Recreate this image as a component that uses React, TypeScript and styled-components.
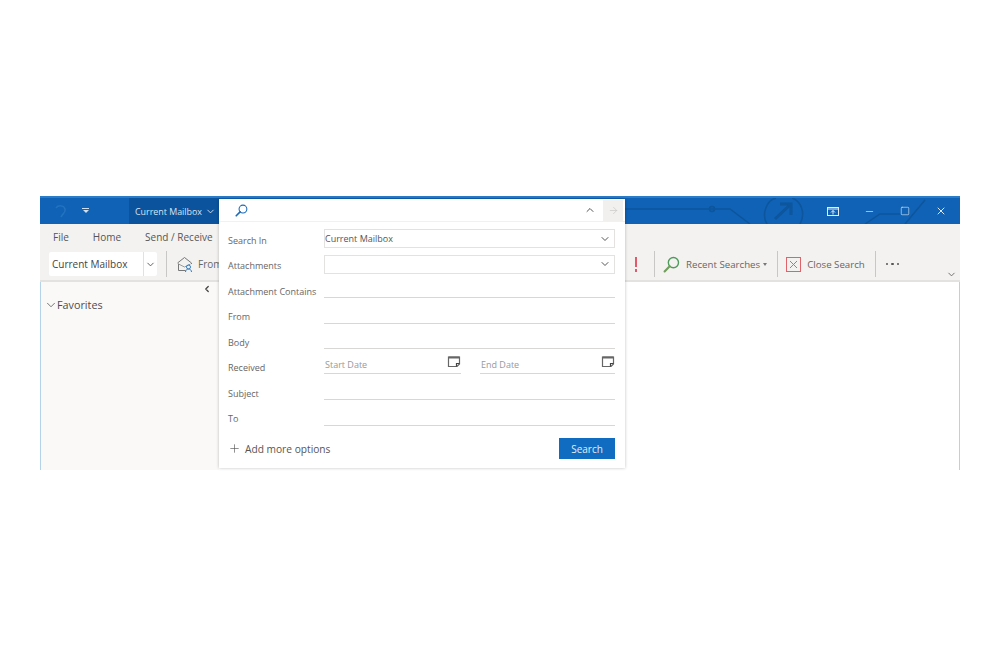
import React from 'react';
import styled, {createGlobalStyle} from 'styled-components';
import {ChevronDown, ChevronUp, ChevronLeft, ArrowRight, Plus, X, Minus, Square} from 'lucide-react';

const GlobalStyle = createGlobalStyle`
  html, body {
    margin: 0;
    padding: 0;
    background: #fff;
    font-family: "Open Sans", "Noto Sans", sans-serif;
  }
`;

const Page = styled.div`
  width: 1000px;
  height: 667px;
  padding: 196px 40px 0;
  box-sizing: border-box;
  background: #fff;
  overflow: hidden;
`;

const Window = styled.div`
  position: relative;
  width: 920px;
  height: 274px;
  display: flex;
  flex-direction: column;
  background: #fff;
  box-sizing: border-box;
`;

const TitleBar = styled.div`
  position: relative;
  height: 28px;
  flex: none;
  display: flex;
  align-items: center;
  background: #0f62b5;
  border-top: 2px solid #2b7cc8;
  box-sizing: border-box;
  overflow: hidden;
`;

const UndoGlyph = styled.svg`
  margin-left: 14px;
  flex: none;
`;

const QuickArrow = styled.span`
  width: 7px;
  height: 5px;
  margin-left: 16px;
  margin-right: 40px;
  border-top: 1px solid #cfe0f2;
  display: flex;
  justify-content: center;

  &::after {
    content: '';
    width: 0;
    height: 0;
    margin-top: 1px;
    border-left: 3px solid transparent;
    border-right: 3px solid transparent;
    border-top: 3px solid #cfe0f2;
  }
`;

const ScopeButton = styled.div`
  height: 26px;
  width: 91px;
  flex: none;
  display: flex;
  align-items: center;
  padding-left: 6px;
  gap: 3px;
  box-sizing: border-box;
  background: #0b539c;
  color: #d7e5f3;
  font-size: 8.9px;
  white-space: nowrap;
`;

const CircuitArt = styled.svg`
  position: absolute;
  left: 580px;
  top: 0;
  pointer-events: none;
`;

const WindowButtons = styled.div`
  position: relative;
  margin-left: auto;
  display: flex;
  align-items: center;
  gap: 25px;
  padding-right: 13px;
  color: #dbe8f5;
`;

const Ribbon = styled.div`
  height: 58px;
  flex: none;
  display: flex;
  flex-direction: column;
  background: #f3f2f1;
  border-bottom: 2px solid #e4e2e0;
  box-sizing: border-box;
  position: relative;
`;

const TabRow = styled.div`
  height: 25px;
  display: flex;
  align-items: center;
  gap: 24px;
  padding-left: 13px;
  padding-top: 1px;
  box-sizing: border-box;
  font-size: 10px;
  color: #555;
`;

const CommandRow = styled.div`
  height: 30px;
  display: flex;
  align-items: center;
  padding-left: 9px;
`;

const ScopeSelect = styled.div`
  width: 108px;
  height: 24px;
  display: flex;
  background: #fff;
  font-size: 10px;
  color: #444;
  border-radius: 2px;
`;

const ScopeText = styled.span`
  flex: 1;
  display: flex;
  align-items: center;
  padding-left: 3px;
  border-right: 1px solid #e3e1df;
`;

const ScopeArrow = styled.span`
  width: 13px;
  display: flex;
  align-items: center;
  justify-content: center;
  color: #555;
`;

const RibbonDivider = styled.span<{$gap?: number}>`
  width: 1px;
  height: 26px;
  flex: none;
  margin-left: ${props => props.$gap || 0}px;
  background: #c9c7c5;
`;

const FromButton = styled.div`
  display: flex;
  align-items: center;
  gap: 5px;
  margin-left: 9px;
  font-size: 10px;
  color: #666;
  width: 41px;
  flex: none;
`;

const FromGlyph = styled.svg`
  flex: none;
`;

const RightCommands = styled.div`
  margin-left: 418px;
  display: flex;
  align-items: center;
`;

const Important = styled.span`
  width: 2px;
  height: 15px;
  flex: none;
  margin-right: 17px;
  background: linear-gradient(#e2596a 0 70%, transparent 70% 82%, #e2596a 82%);
`;

const CommandButton = styled.div`
  display: flex;
  align-items: center;
  gap: 6px;
  padding: 0 10px 0 8px;
  font-size: 9.7px;
  color: #666;
  white-space: nowrap;
`;

const TinyCaret = styled.span`
  width: 0;
  height: 0;
  margin-left: -3px;
  border-left: 2.5px solid transparent;
  border-right: 2.5px solid transparent;
  border-top: 3px solid #777;
`;

const MoreDots = styled.span`
  margin-left: 10px;
  display: flex;
  gap: 3px;

  & > i {
    width: 2.5px;
    height: 2.5px;
    border-radius: 50%;
    background: #555;
  }
`;

const RibbonCollapse = styled.span`
  position: absolute;
  right: 3px;
  bottom: 0;
  color: #666;
  display: flex;
`;

const Body = styled.div`
  flex: 1;
  display: flex;
  min-height: 0;
  border-left: 1px solid #b5d3e8;
  border-right: 1px solid #b5d3e8;
`;

const Sidebar = styled.div`
  width: 178px;
  flex: none;
  background: #faf9f8;
  color: #555;
  box-sizing: border-box;
  padding-left: 3px;
`;

const CollapseRow = styled.div`
  height: 14px;
  display: flex;
  justify-content: flex-end;
  align-items: center;
  padding-right: 7px;
  color: #444;
`;

const FavoritesRow = styled.div`
  display: flex;
  align-items: center;
  gap: 0;
  margin-top: 1px;
  font-size: 10.8px;
  color: #4d4d4d;

  & > svg {
    margin-right: -1px;
  }
`;

const SearchPopup = styled.div`
  position: absolute;
  left: 179px;
  top: 3px;
  width: 406px;
  height: 269px;
  background: #fff;
  box-shadow: 0 0 3px rgba(0, 0, 0, 0.25);
  display: flex;
  flex-direction: column;
  box-sizing: border-box;
  color: #666;
`;

const SearchBar = styled.div`
  height: 22px;
  flex: none;
  display: flex;
  align-items: center;
  padding-left: 16px;
  color: #1b6ab8;
  border-bottom: 1px solid #f2f1f0;
`;

const CollapseUp = styled.span`
  margin-left: auto;
  margin-right: 7px;
  display: flex;
  color: #555;
`;

const GoButton = styled.span`
  width: 20px;
  height: 21px;
  margin-right: 2px;
  display: flex;
  align-items: center;
  justify-content: center;
  background: #f1f0ef;
  color: #c9c7c5;
`;

const Form = styled.div`
  flex: 1;
  display: flex;
  flex-direction: column;
  padding: 4px 10px 0 9px;
`;

const FieldRow = styled.div`
  height: 25.5px;
  flex: none;
  display: grid;
  grid-template-columns: 96px 1fr;
  align-items: stretch;
`;

const Label = styled.span`
  font-size: 9px;
  color: #666;
  white-space: nowrap;
  align-self: center;
  padding-top: 3px;
`;

const SelectBox = styled.div`
  height: 17px;
  align-self: center;
  display: flex;
  align-items: center;
  justify-content: space-between;
  padding: 0 3px 0 0;
  border: 1px solid #e3e2e1;
  font-size: 9px;
  color: #555;
`;

const LineInput = styled.div`
  margin-bottom: 4.5px;
  border-bottom: 1px solid #d8d7d6;
`;

const DatePair = styled.div`
  display: grid;
  grid-template-columns: 137px 135px;
  column-gap: 19px;
`;

const DateInput = styled.div`
  height: 20px;
  align-self: start;
  display: flex;
  align-items: center;
  justify-content: space-between;
  border-bottom: 1px solid #d8d7d6;
  font-size: 9px;
  color: #999;
  padding-left: 1px;
  padding-top: 3px;
  box-sizing: border-box;
`;

const CalendarGlyph = styled.svg`
  margin-top: -8px;
  flex: none;
`;

const FormFooter = styled.div`
  margin-top: 8px;
  display: flex;
  align-items: center;
`;

const AddOptions = styled.div`
  display: flex;
  align-items: center;
  gap: 4px;
  font-size: 10.2px;
  color: #555;
`;

const SearchButton = styled.button`
  margin-left: auto;
  width: 56px;
  height: 21px;
  padding: 0;
  border: 0;
  background: #0f6cc0;
  color: #e2eef8;
  font-family: inherit;
  font-size: 10px;
`;

function Calendar() {
  return (
    <CalendarGlyph width="14" height="14" viewBox="0 0 14 14" fill="none" stroke="#666" strokeWidth="1.2">
      <path d="M1.5 3h11v7l-2.5 2.500h-8.500z"/>
      <path d="M1.500 3.500h11" strokeWidth="2"/>
      <path d="M12.500 9.500h-3v3" stroke="#444"/>
    </CalendarGlyph>
  );
}

// magnifier with its handle on the lower left, as in Outlook
function Magnifier({size, ring, handle}: {size: number; ring: string; handle: string}) {
  return (
    <svg width={size} height={size} viewBox="0 0 16 16" fill="none">
      <circle cx="9.800" cy="6.200" r="4.800" stroke={ring} strokeWidth="1.300"/>
      <path d="M6.300 9.700L1.500 14.500" stroke={handle} strokeWidth="2" strokeLinecap="round"/>
    </svg>
  );
}

export default function App() {
  return (
    <Page>
      <GlobalStyle/>
      <Window>
        <TitleBar>
          <UndoGlyph width="12" height="14" viewBox="0 0 12 14" fill="none" stroke="#2272bf" strokeWidth="1.500">
            <path d="M2 4c2-3 8-3 9 1s-3 5-4 8"/>
          </UndoGlyph>
          <QuickArrow/>
          <ScopeButton>Current Mailbox <ChevronDown size={11} strokeWidth={2}/></ScopeButton>
          <CircuitArt width="320" height="26" viewBox="0 0 320 26" fill="none" stroke="#0d559c" strokeWidth="1.500">
            <path d="M0 11h110l20 15"/>
            <circle cx="92" cy="11" r="2.500"/>
            <path d="M147 26c-6-10 0-24 9-26M172 0c9 3 14 15 8 26"/>
            <path d="M155 21l16-15M160 6h11v11" strokeWidth="3"/>
            <path d="M245 26l15-10h20M285 26l20-24"/>
          </CircuitArt>
          <WindowButtons>
            <svg width="12" height="9" viewBox="0 0 12 9" fill="none" stroke="#e3edf7">
              <rect x="0.500" y="0.500" width="11" height="8"/>
              <path d="M6 7.500V3.500M4 5.500l2-2 2 2"/>
              <path d="M0.500 2h11"/>
            </svg>
            <Minus size={11} strokeWidth={1.500}/>
            <Square size={10} strokeWidth={1.500}/>
            <X size={12} strokeWidth={2}/>
          </WindowButtons>
        </TitleBar>
        <Ribbon>
          <TabRow>
            <span>File</span>
            <span>Home</span>
            <span>Send / Receive</span>
          </TabRow>
          <CommandRow>
            <ScopeSelect>
              <ScopeText>Current Mailbox</ScopeText>
              <ScopeArrow><ChevronDown size={11} strokeWidth={2}/></ScopeArrow>
            </ScopeSelect>
            <RibbonDivider $gap={9}/>
            <FromButton>
              <FromGlyph width="17" height="17" viewBox="0 0 17 17" fill="none">
                <path d="M1.500 7l7-5.500 7 5.500v1M2.500 7.500v7h7" stroke="#777"/>
                <path d="M2.500 8l6 3 6-3" stroke="#999"/>
                <circle cx="12.500" cy="11" r="2" stroke="#2a7fc6"/>
                <path d="M9.500 16c0-2 1.500-3 3-3s3 1 3 3" stroke="#2a7fc6"/>
              </FromGlyph>
              From
            </FromButton>
            <RightCommands>
              <Important/>
              <RibbonDivider/>
              <CommandButton>
                <Magnifier size={17} ring="#4f9a5c" handle="#6f9f5a"/>
                Recent Searches
                <TinyCaret/>
              </CommandButton>
              <RibbonDivider/>
              <CommandButton>
                <svg width="15" height="15" viewBox="0 0 15 15" fill="none" stroke="#e0636b">
                  <rect x="0.500" y="0.500" width="14" height="14"/>
                  <path d="M4 4l7 7M11 4l-7 7"/>
                </svg>
                Close Search
              </CommandButton>
              <RibbonDivider/>
              <MoreDots><i/><i/><i/></MoreDots>
            </RightCommands>
          </CommandRow>
          <RibbonCollapse><ChevronDown size={11} strokeWidth={2}/></RibbonCollapse>
        </Ribbon>
        <Body>
          <Sidebar>
            <CollapseRow><ChevronLeft size={10} strokeWidth={3}/></CollapseRow>
            <FavoritesRow><ChevronDown size={14} strokeWidth={1.300}/>Favorites</FavoritesRow>
          </Sidebar>
        </Body>
        <SearchPopup>
          <SearchBar>
            <Magnifier size={13} ring="#1b6ab8" handle="#1b6ab8"/>
            <CollapseUp><ChevronUp size={12} strokeWidth={2}/></CollapseUp>
            <GoButton><ArrowRight size={11} strokeWidth={1.500}/></GoButton>
          </SearchBar>
          <Form>
            <FieldRow>
              <Label>Search In</Label>
              <SelectBox>Current Mailbox <ChevronDown size={12} strokeWidth={2}/></SelectBox>
            </FieldRow>
            <FieldRow>
              <Label>Attachments</Label>
              <SelectBox><span/><ChevronDown size={12} strokeWidth={2}/></SelectBox>
            </FieldRow>
            <FieldRow>
              <Label>Attachment Contains</Label>
              <LineInput/>
            </FieldRow>
            <FieldRow>
              <Label>From</Label>
              <LineInput/>
            </FieldRow>
            <FieldRow>
              <Label>Body</Label>
              <LineInput/>
            </FieldRow>
            <FieldRow>
              <Label>Received</Label>
              <DatePair>
                <DateInput>Start Date <Calendar/></DateInput>
                <DateInput>End Date <Calendar/></DateInput>
              </DatePair>
            </FieldRow>
            <FieldRow>
              <Label>Subject</Label>
              <LineInput/>
            </FieldRow>
            <FieldRow>
              <Label>To</Label>
              <LineInput/>
            </FieldRow>
            <FormFooter>
              <AddOptions><Plus size={13} strokeWidth={1.200}/>Add more options</AddOptions>
              <SearchButton>Search</SearchButton>
            </FormFooter>
          </Form>
        </SearchPopup>
      </Window>
    </Page>
  );
}
